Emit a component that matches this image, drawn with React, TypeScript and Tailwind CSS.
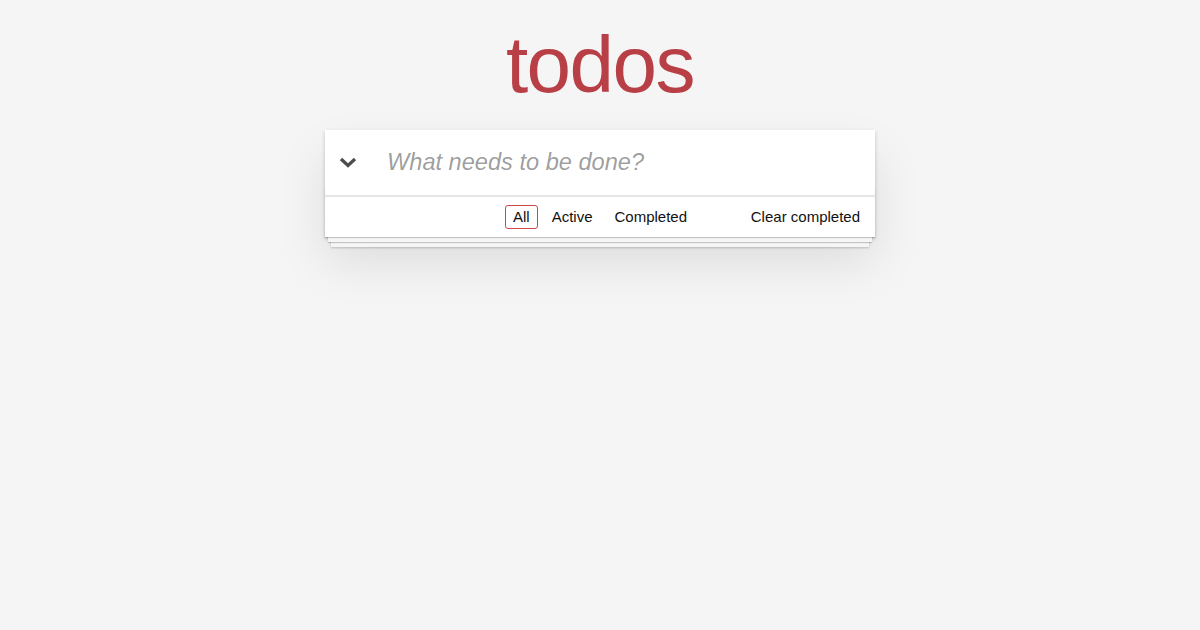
import { useState } from "react";

const filters = ["All", "Active", "Completed"];

export default function App() {
  const [text, setText] = useState("");
  const [filter, setFilter] = useState("All");

  return (
    <div className="min-h-screen bg-[#f5f5f5] [font-family:'Liberation_Sans',Arial,sans-serif] text-[#111] flex flex-col items-center pt-[25px]">
      <h1 className="h-[80px] text-[80px] leading-none tracking-[-1.5px] font-extralight text-[#b83f45] text-center">
        todos
      </h1>

      <section className="mt-[25px] w-[550px] bg-white shadow-[0_2px_4px_0_rgba(0,0,0,0.2),0_25px_50px_0_rgba(0,0,0,0.1)]">
        <header className="flex items-center h-[65px]">
          <button className="w-[45px] h-[65px] flex items-center justify-center shrink-0">
            <svg width="18" height="11" viewBox="0 0 18 11">
              <path
                d="M2 2 L9 8.5 L16 2"
                fill="none"
                stroke="#4d4d4d"
                strokeWidth="3.2"
                strokeLinejoin="miter"
              />
            </svg>
          </button>
          <input
            value={text}
            onChange={(e) => setText(e.target.value)}
            placeholder="What needs to be done?"
            className="flex-1 h-[65px] pl-[17px] pr-4 text-[23.6px] outline-none bg-transparent placeholder:italic placeholder:text-[rgba(0,0,0,0.4)]"
          />
        </header>

        <footer className="relative h-[42px] px-[15px] py-[10px] border-t-2 border-[#e6e6e6] text-[15px] leading-[20px] grid grid-cols-[1fr_auto_1fr] items-center before:content-[''] before:absolute before:inset-x-0 before:bottom-0 before:h-[50px] before:pointer-events-none before:shadow-[0_1px_1px_rgba(0,0,0,0.2),0_8px_0_-3px_#f6f6f6,0_9px_1px_-3px_rgba(0,0,0,0.2),0_16px_0_-6px_#f6f6f6,0_17px_2px_-6px_rgba(0,0,0,0.2)]">
          <span />
          <ul className="flex items-center h-[20px]">
            {filters.map((f) => (
              <li key={f} className="flex items-center">
                <a
                  href="#"
                  onClick={(e) => {
                    e.preventDefault();
                    setFilter(f);
                  }}
                  className={
                    filter === f
                      ? "block mx-[3px] px-[7px] py-[1px] rounded-[3px] border border-[#ce4646]"
                      : "block mx-[3px] px-[7px] py-[1px] rounded-[3px] border border-transparent hover:border-[#db7676]"
                  }
                >
                  {f}
                </a>
              </li>
            ))}
          </ul>
          <button className="justify-self-end relative">Clear completed</button>
        </footer>
      </section>
    </div>
  );
}
